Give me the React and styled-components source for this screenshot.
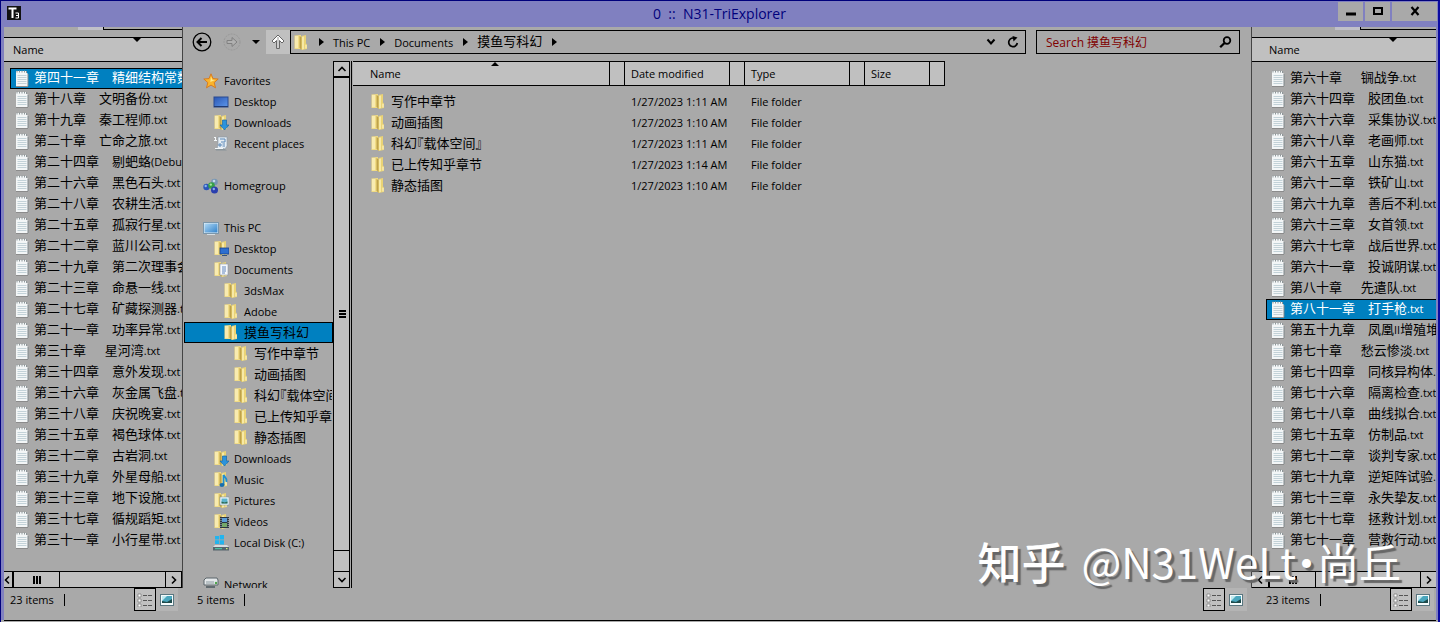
import React from "react";
import styled, { createGlobalStyle, css } from "styled-components";

const GlobalStyle = createGlobalStyle`
  *, *::before, *::after { box-sizing: border-box; }
  html, body { margin: 0; background: #a9a9a9; }
  body {
    font-family: "Open Sans", "Noto Sans CJK SC", sans-serif;
    font-size: 13px;
    line-height: 21px;
    color: #000;
    overflow: hidden;
  }
  button, input, a { font: inherit; color: inherit; }
  button { background: none; border: 0; padding: 0; margin: 0; cursor: default; }
  ul { list-style: none; margin: 0; padding: 0; }
  svg { display: block; flex: none; }
`;

/* ---------- text ---------- */

const Latin = styled.span`
  font-size: 11px;
`;

const Label = styled.span`
  white-space: pre;
  line-height: 20px;
  font-feature-settings: "halt";
  padding-bottom: ${(p) => (p.$cjk ? 2 : 0)}px;
`;

/* Latin runs are set smaller than the Chinese runs beside them. */
function Text({ children }) {
  const runs = children.match(/[\u0020-\u007e]+|[^\u0020-\u007e]+/g) || [];
  const isLatin = (run) => run.charCodeAt(0) < 127;
  return (
    <Label $cjk={!runs.every(isLatin)}>
      {runs.map((run, i) => (isLatin(run) ? <Latin key={i}>{run}</Latin> : run))}
    </Label>
  );
}

/* ---------- icons ---------- */

const FileIcon = () => (
  <svg width="15" height="18" viewBox="1 1 15 18">
    <path d="M2 17.500h12" stroke="#8b8b8b" />
    <path d="M2 2h11v2l1 1v12H2z" fill="#f3f6f7" />
    <path d="M14 5v12" stroke="#7d8588" />
    <path d="M3 1.500v2M5.500 1.500v2M8 1.500v2M10.500 1.500v2M12.500 2v2" stroke="#8d9699" strokeWidth="1" />
    <path d="M3.500 6.500h9M3.500 8.500h9M3.500 10.500h9M3.500 12.500h9M3.500 14.500h9" stroke="#c3d2d8" />
  </svg>
);

const FolderShape = () => (
  <>
    <path d="M1.500 1.500L8 1v14H1.500z" fill="#f1dc85" />
    <path d="M2 2h3v12H2z" fill="#f8ebb0" />
    <path d="M6.500 2L9 3.500V16l-2.500-2z" fill="#bfa24a" />
    <path d="M8.500 2L13 1v8.500l1 1V15l-5.500 1z" fill="#ead375" />
    <path d="M9 3l2-.5V15l-2 .5z" fill="#f7e9a6" />
    <path d="M12.500 10.500l1 .5v3.500h-1z" fill="#fff8cf" />
  </>
);

const overlays = {
  plain: null,
  downloads: <path d="M9.500 6h4v5h2.500l-4.500 5-4.500-5h2.500z" fill="#2b93dc" stroke="#1567a8" strokeWidth=".7" />,
  desktop: <><rect x="7" y="8" width="9" height="6" fill="#2d6fd0" stroke="#18418c" strokeWidth=".8" /><path d="M9 15.500h5" stroke="#35507c" /></>,
  documents: <><rect x="7" y="3" width="8" height="11" fill="#f6f8fb" stroke="#8b94a4" strokeWidth=".6" /><path d="M9 6h4M9 8h4M9 10h4M9 12h3" stroke="#4f78b4" strokeWidth=".9" /></>,
  music: <><path d="M10.500 14V4c1 2 4 3 3 7" fill="none" stroke="#1f8fd2" strokeWidth="1.800" /><ellipse cx="9" cy="14" rx="2.500" ry="2" fill="#176eae" /></>,
  pictures: <><rect x="7" y="5" width="9" height="8" fill="#f4fbff" stroke="#7b929c" strokeWidth=".6" /><rect x="8.500" y="6.500" width="6" height="5" fill="#5cb3cc" /><path d="M8.500 11.500v-2l3 1 3-1v2z" fill="#2e6a54" /></>,
  videos: <><rect x="7" y="4" width="9" height="11" fill="#2b3540" /><rect x="9" y="5" width="5" height="4" fill="#5b9dd8" /><rect x="9" y="10" width="5" height="4" fill="#74a86a" /><path d="M8 5v10M15.200 5v10" stroke="#d8dfe5" strokeDasharray="1 1" strokeWidth=".8" /></>,
};

const FolderIcon = ({ kind = "plain" }) => (
  <svg width="16" height="17" viewBox="0 0 16 17"><FolderShape />{overlays[kind]}</svg>
);

const StarIcon = () => (
  <svg width="16" height="16" viewBox="0 0 16 16">
    <path d="M8 .8l2 4.800 5.200.4-4 3.600 1.300 5.200L8 12.100l-4.500 2.700 1.300-5.200-4-3.600L6 5.600z" fill="#fbb52c" stroke="#d6761b" strokeWidth=".9" />
    <path d="M8 3.500l1.300 3.200 3 .3-5 2z" fill="#ffe98a" />
  </svg>
);

const ScreenIcon = ({ light }) => (
  <svg width="16" height="16" viewBox="0 0 16 16">
    <defs>
      <linearGradient id={light ? "scrA" : "scrB"} x1="0" y1="0" x2="1" y2="1">
        <stop offset="0" stopColor={light ? "#b5dcf6" : "#2a56b4"} />
        <stop offset="1" stopColor={light ? "#2d7fc9" : "#5d97ea"} />
      </linearGradient>
    </defs>
    <rect x="1" y="3" width="14" height="10" fill={light ? "url(#scrA)" : "url(#scrB)"} stroke={light ? "#e4eef4" : "#2a4a90"} />
    {light ? <path d="M.5 2.500h15v11H.5z" fill="none" stroke="#597f9c" strokeWidth=".7" /> : <path d="M1 12.500h14" stroke="#203a70" />}
    {light && <path d="M4 14.500h8" stroke="#d5dde2" />}
  </svg>
);

const RecentIcon = () => (
  <svg width="16" height="16" viewBox="0 0 16 16">
    <path d="M5 1h9v9l-2 3H4l1-4z" fill="#e6edf3" stroke="#8799aa" strokeWidth=".6" />
    <path d="M7 3h5v3H8M6 8h2v2H6zM9.500 8H12M9.500 10H12" fill="none" stroke="#5b88b8" />
    <path d="M1 1.500h2M1 4.500h3M2.500 1v4" stroke="#f4f8fa" />
    <path d="M2 12.500h9l3 2H3z" fill="#89949a" /><path d="M2 12.500h8" stroke="#f4f8fa" />
  </svg>
);

const HomegroupIcon = () => (
  <svg width="16" height="16" viewBox="0 0 16 16">
    <circle cx="3.500" cy="9" r="3.200" fill="#2c57b8" /><circle cx="2.700" cy="8" r="1.200" fill="#8db4ee" />
    <circle cx="11.500" cy="4" r="3.300" fill="#7796b4" /><circle cx="11" cy="3" r="1.300" fill="#c3d8ea" />
    <circle cx="8.500" cy="7.500" r="3.300" fill="#37a047" /><circle cx="7.800" cy="6.600" r="1.200" fill="#a6e4a2" />
    <circle cx="11.500" cy="12" r="3.500" fill="#2a3fae" /><circle cx="10.800" cy="11" r="1.200" fill="#89aeea" />
  </svg>
);

const DiskIcon = () => (
  <svg width="16" height="16" viewBox="0 0 16 16">
    <path d="M2 1h4v3.500H2zM6.700 0H11v4.500H6.700zM2 5.200h4V9H2zM6.700 5.200H11v4.300H6.700z" fill="#22b4ee" />
    <path d="M2 10h12l2 2H0z" fill="#d7dcdf" />
    <rect x="0" y="12" width="16" height="3.500" fill="#56656d" /><rect x="2" y="13" width="7" height="1.200" fill="#4fc0a2" /><rect x="13" y="13" width="1.500" height="1.200" fill="#d6f27a" />
  </svg>
);

const NetworkIcon = () => (
  <svg width="16" height="16" viewBox="0 0 16 16">
    <path d="M1 3l2-2h11l1 2v5H1z" fill="#e4e8ea" stroke="#5b656a" />
    <rect x="3" y="4" width="8" height="3" fill="#b8c1c5" /><circle cx="13" cy="6" r="1.200" fill="#4ca349" />
    <path d="M3 10h9" stroke="#616b70" strokeWidth="2" />
  </svg>
);

const treeIcon = (name) =>
  ({ star: <StarIcon />, screen: <ScreenIcon />, pc: <ScreenIcon light />, recent: <RecentIcon />, home: <HomegroupIcon />, disk: <DiskIcon />, network: <NetworkIcon /> }[name] || <FolderIcon kind={name} />);

const Chevron = ({ dir }) => {
  const d = { up: "M1.500 7L5 3.500 8.500 7", down: "M1.500 3L5 6.500 8.500 3", left: "M7 1.500L3.500 5 7 8.500", right: "M3 1.500L6.500 5 3 8.500" }[dir];
  return <svg width="10" height="10" viewBox="0 0 10 10"><path d={d} fill="none" stroke="#000" strokeWidth="1.600" /></svg>;
};

const Grip = ({ vertical }) => (
  <svg width="8" height="8" viewBox="0 0 8 8"><path d={vertical ? "M1 1h7M1 4h7M1 7h7" : "M1 0v8M4 0v8M7 0v8"} stroke="#000" strokeWidth="2" /></svg>
);

const Triangle = ({ dir }) => {
  const d = { up: "M4 0l4 4H0z", down: "M0 0h8L4 4z" }[dir];
  return <svg width="8" height="4" viewBox="0 0 8 4"><path d={d} /></svg>;
};

const CrumbArrow = () => <svg width="5" height="8" viewBox="0 0 5 8"><path d="M0 0l5 4-5 4z" /></svg>;

/* ---------- window frame ---------- */

const Window = styled.div`
  display: flex;
  flex-direction: column;
  height: 100vh;
  background: #a9a9a9;
  border-top: 1px solid #00007c;
  border-left: 1px solid #00007c;
  border-right: 2px solid #0a0aa0;
`;

const TitleBar = styled.header`
  flex: none;
  display: grid;
  grid-template-columns: 1fr auto 1fr;
  align-items: start;
  height: 26px;
  background: #8080c0;
`;

const AppLogo = styled.div`
  margin: 5px 6px;
`;

const Title = styled.h1`
  margin: 0;
  font-size: 14px;
  font-weight: 400;
  line-height: 25px;
  color: #00007c;
  white-space: pre;
`;

const Controls = styled.div`
  display: flex;
  justify-content: flex-end;
  gap: 2px;
  padding: 1px 1px 0 0;
`;

const ControlButton = styled.button`
  display: grid;
  place-items: center;
  width: ${(p) => (p.$wide ? 45 : 25)}px;
  height: 19px;
  padding-bottom: 2px;
  background: #a9a9a9;
`;

const Panes = styled.main`
  flex: 1;
  min-height: 0;
  display: flex;
  border: solid #8080c0;
  border-width: 0 2px 0 3px;
  position: relative;
`;

const Bottom = styled.footer`
  flex: none;
  height: 2px;
  border-top: 1px solid #000;
  margin: 0 2px 0 3px;
`;

const Pane = styled.section`
  display: flex;
  flex-direction: column;
  flex: ${(p) => (p.$width ? `0 0 ${p.$width}px` : "1 1 0")};
  min-width: 0;
  overflow: hidden;
`;

const PaneBody = styled.div`
  flex: 1;
  min-height: 0;
  display: flex;
  flex-direction: column;
  border: 0 solid #444;
  border-left-width: ${(p) => (p.$edge === "left" ? 1 : 0)}px;
  border-right-width: ${(p) => (p.$edge === "right" ? 1 : 0)}px;
`;

/* ---------- side panes ---------- */

const Strip = styled.div`
  flex: none;
  display: flex;
  height: 10px;
`;

const StripTab = styled.div`
  width: 25px;
  height: 3px;
  margin-left: ${(p) => p.$indent}px;
  background: #c0c0c8;
`;

const StripBox = styled.div`
  flex: 1;
  height: 3px;
  border: solid #000;
  border-width: 0 0 1px 1px;
`;

const NameHeader = styled.button`
  position: relative;
  flex: none;
  height: 25px;
  padding: 0 0 0 ${(p) => p.$indent}px;
  border: solid #000;
  border-width: 1px 0;
  background: #c0c0c0;
  text-align: left;
  svg { position: absolute; top: 0; left: ${(p) => p.$mark}px; }
`;

const FileList = styled.ul`
  flex: 1;
  min-height: 0;
  overflow: hidden;
  padding: 6px 0 0 ${(p) => p.$indent}px;
`;

const selected = css`
  background: #0080c0;
  border-color: #000;
`;

const FileRow = styled.li`
  display: flex;
  align-items: center;
  gap: 4px;
  height: 21px;
  padding-left: 4px;
  border: 1px solid transparent;
  border-right: 0;
  white-space: nowrap;
  ${(p) => p.$selected && selected}
  ${(p) => p.$selected && "color: #fff;"}
`;

const HScroll = styled.div`
  flex: none;
  display: flex;
  height: 17px;
  border: solid #000;
  border-width: 1px ${(p) => (p.$closed ? 1 : 0)}px 1px 0;
  background: #c0c0c0;
`;

const HArrow = styled.button`
  display: grid;
  place-items: center;
  justify-content: ${(p) => (p.$clipped ? "end" : "center")};
  flex: 0 0 ${(p) => p.$width}px;
  overflow: hidden;
  border: 0 solid #000;
  border-left-width: ${(p) => (p.$end ? 1 : 0)}px;
  border-right-width: ${(p) => (p.$end ? 0 : 2)}px;
`;

const HThumb = styled.div`
  display: grid;
  place-items: center;
  flex: 0 0 46px;
  border-right: 1px solid #000;
  margin-right: auto;
`;

const Status = styled.div`
  flex: none;
  display: flex;
  align-items: flex-start;
  height: 32px;
  padding-left: ${(p) => p.$indent}px;
`;

const StatusText = styled.span`
  display: flex;
  align-items: center;
  gap: 10px;
  flex: 1;
  height: 23px;
  &::after { content: ""; width: 1px; height: 12px; background: #000; }
`;

const ViewButton = styled.button`
  display: grid;
  place-items: center;
  width: 22px;
  height: 23px;
  border: 1px solid ${(p) => (p.$on ? "#000" : "#b4b4b4")};
  background: ${(p) => (p.$on ? "#c0c0c0" : "#b4b4b4")};
`;

const ViewButtons = styled.div`
  display: flex;
  margin-right: ${(p) => p.$end}px;
`;

function StatusBar({ indent, count, end = 3 }) {
  return (
    <Status $indent={indent}>
      <StatusText><Text>{`${count} items`}</Text></StatusText>
      <ViewButtons $end={end}>
        <ViewButton $on aria-label="Details view">
          <svg width="16" height="14" viewBox="0 0 16 14">
            <path d="M1 1h3v3H1zM1 6h3v3H1zM1 11h3v3H1z" fill="#fff" stroke="#777" strokeWidth=".7" />
            <path d="M6 2.500h4M11 2.500h4M6 7.500h4M11 7.500h4M6 12.500h4M11 12.500h4" stroke="#555" />
          </svg>
        </ViewButton>
        <ViewButton aria-label="Thumbnail view">
          <svg width="14" height="12" viewBox="0 0 14 12">
            <rect x=".5" y=".5" width="13" height="11" fill="#f5fbfc" stroke="#5a7780" />
            <rect x="2" y="2" width="10" height="7" fill="#4aa6bd" />
            <path d="M2 2h5L2 7z" fill="#bfe9f0" /><path d="M2 9V7l5 1 5-3v4z" fill="#1d4b4c" />
          </svg>
        </ViewButton>
      </ViewButtons>
    </Status>
  );
}

function SidePane({ side, files, active, layout }) {
  return (
    <Pane $width={layout.width} aria-label={`${side} pane`}>
      <PaneBody $edge={side === "left" ? "right" : "left"}>
        <Strip><StripTab $indent={layout.tab} /><StripBox /></Strip>
        <NameHeader $indent={layout.name} $mark={layout.mark}><Text>Name</Text><Triangle dir="down" /></NameHeader>
        <FileList $indent={layout.list}>
          {files.map((name, i) => (
            <FileRow key={name} $selected={i === active}><FileIcon /><Text>{name}</Text></FileRow>
          ))}
        </FileList>
        <HScroll $closed={side === "left"}>
          <HArrow $width={layout.arrow} $clipped={side === "left"} aria-label="Scroll left"><Chevron dir="left" /></HArrow>
          <HThumb><Grip /></HThumb>
          <HArrow $width={16} $end aria-label="Scroll right"><Chevron dir="right" /></HArrow>
        </HScroll>
      </PaneBody>
      <StatusBar indent={layout.status} count={files.length} end={layout.end} />
    </Pane>
  );
}

/* ---------- centre pane ---------- */

const Toolbar = styled.div`
  flex: none;
  display: flex;
  align-items: center;
  height: 30px;
  margin-bottom: 4px;
  padding: 0 11px 0 9px;
`;

const NavButton = styled.button`
  display: grid;
  place-items: center;
  justify-items: ${(p) => (p.$start ? "start" : "center")};
  width: ${(p) => p.$width}px;
  height: 24px;
  background: ${(p) => (p.$raised ? "#c0c0c0" : "none")};
`;

const Address = styled.nav`
  flex: 1;
  min-width: 0;
  display: flex;
  align-items: center;
  height: 24px;
  margin-right: 10px;
  padding: 0 5px 0 2px;
  border: 1px solid #000;
`;

const Crumb = styled.button`
  display: flex;
  align-items: center;
  gap: 9px;
  padding-left: 10px;
`;

const AddressTools = styled.div`
  display: flex;
  gap: 10px;
  margin-left: auto;
`;

const SearchBox = styled.label`
  display: flex;
  align-items: center;
  width: 204px;
  height: 24px;
  padding: 0 7px 0 9px;
  border: 1px solid #000;
`;

const SearchInput = styled.input`
  flex: 1;
  min-width: 0;
  padding: 0;
  border: 0;
  outline: 0;
  background: none;
  font-size: 12px;
  &::placeholder { color: #800000; opacity: 1; }
`;

const Browser = styled.div`
  flex: 1;
  min-height: 0;
  display: flex;
`;

const Tree = styled.ul`
  flex: 0 0 150px;
  padding: 9px 0 0 1px;
  overflow: hidden;
`;

const TreeRow = styled.li`
  height: 21px;
`;

const TreeButton = styled.button`
  display: flex;
  align-items: center;
  gap: 5px;
  width: 100%;
  height: 21px;
  padding-left: ${(p) => 18 + p.$level * 10}px;
  border: 1px solid transparent;
  overflow: hidden;
  ${(p) => p.$selected && selected}
`;

const VScroll = styled.div`
  flex: 0 0 17px;
  display: flex;
  flex-direction: column;
  border: 1px solid #000;
  background: #c0c0c0;
`;

const VArrow = styled.button`
  display: grid;
  place-items: center;
  flex: 0 0 16px;
  border: 0 solid #000;
  border-top-width: ${(p) => (p.$end ? 1 : 0)}px;
  border-bottom-width: ${(p) => (p.$end ? 0 : 2)}px;
`;

const VThumb = styled.div`
  display: grid;
  place-items: center;
  flex: 1;
  margin-bottom: 20px;
  border-bottom: 1px solid #000;
`;

const Details = styled.div`
  flex: 1;
  min-width: 0;
  margin-left: 1px;
  border-left: 1px solid #000;
  overflow: hidden;
`;

const Table = styled.table`
  table-layout: fixed;
  width: 592px;
  margin-left: 1px;
  border-collapse: separate;
  border-spacing: 0;
  tbody::before { content: ""; display: block; height: 5px; }
`;

const HeadCell = styled.th`
  position: relative;
  width: ${(p) => p.$width}px;
  height: 25px;
  padding: 0 0 0 ${(p) => p.$indent || 6}px;
  border: solid #000;
  border-width: 1px 1px 1px 0;
  background: linear-gradient(#000, #000) right 14px top / 1px 100% no-repeat #c0c0c0;
  font-weight: 400;
  text-align: left;
  svg { position: absolute; top: 0; left: 138px; }
`;

const Cell = styled.td`
  height: 21px;
  padding: 0 0 0 6px;
  white-space: nowrap;
`;

const NameCell = styled.div`
  display: flex;
  align-items: center;
  gap: 5px;
  height: 21px;
  padding-left: 11px;
`;

const Watermark = styled.div`
  position: absolute;
  right: 35px;
  bottom: 29px;
  display: flex;
  gap: 16px;
  font-family: "Noto Sans CJK SC", sans-serif;
  font-size: 42px;
  line-height: 60px;
  color: #fff;
  font-feature-settings: "halt";
  text-shadow: 3px 3px 1px #666;
  white-space: pre;
  pointer-events: none;
  b { font-size: 44px; font-weight: 500; }
`;

/* ---------- data ---------- */

const leftFiles = [
  "第四十一章　精细结构常数.txt", "第十八章　文明备份.txt", "第十九章　秦工程师.txt", "第二十章　亡命之旅.txt",
  "第二十四章　剔蚆蛒(Debug).txt", "第二十六章　黑色石头.txt", "第二十八章　农耕生活.txt", "第二十五章　孤寂行星.txt",
  "第二十二章　蓝川公司.txt", "第二十九章　第二次理事会.txt", "第二十三章　命悬一线.txt", "第二十七章　矿藏探测器.txt",
  "第二十一章　功率异常.txt", "第三十章　  星河湾.txt", "第三十四章　意外发现.txt", "第三十六章　灰金属飞盘.txt",
  "第三十八章　庆祝晚宴.txt", "第三十五章　褐色球体.txt", "第三十二章　古岩洞.txt", "第三十九章　外星母船.txt",
  "第三十三章　地下设施.txt", "第三十七章　循规蹈矩.txt", "第三十一章　小行星带.txt",
];

const rightFiles = [
  "第六十章　  锎战争.txt", "第六十四章　胶团鱼.txt", "第六十六章　采集协议.txt", "第六十八章　老画师.txt",
  "第六十五章　山东猫.txt", "第六十二章　铁矿山.txt", "第六十九章　善后不利.txt", "第六十三章　女首领.txt",
  "第六十七章　战后世界.txt", "第六十一章　投诚阴谋.txt", "第八十章　  先遣队.txt", "第八十一章　打手枪.txt",
  "第五十九章　凤凰II增殖堆.txt", "第七十章　  愁云惨淡.txt", "第七十四章　同核异构体.txt", "第七十六章　隔离检查.txt",
  "第七十八章　曲线拟合.txt", "第七十五章　仿制品.txt", "第七十二章　谈判专家.txt", "第七十九章　逆矩阵试验.txt",
  "第七十三章　永失挚友.txt", "第七十七章　拯救计划.txt", "第七十一章　营救行动.txt",
];

const tree = [
  [0, "star", "Favorites"], [1, "screen", "Desktop"], [1, "downloads", "Downloads"], [1, "recent", "Recent places"], null,
  [0, "home", "Homegroup"], null,
  [0, "pc", "This PC"], [1, "desktop", "Desktop"], [1, "documents", "Documents"], [2, "plain", "3dsMax"], [2, "plain", "Adobe"],
  [2, "plain", "摸鱼写科幻", true], [3, "plain", "写作中章节"], [3, "plain", "动画插图"], [3, "plain", "科幻『载体空间』"],
  [3, "plain", "已上传知乎章节"], [3, "plain", "静态插图"],
  [1, "downloads", "Downloads"], [1, "music", "Music"], [1, "pictures", "Pictures"], [1, "videos", "Videos"], [1, "disk", "Local Disk (C:)"], null,
  [0, "network", "Network"],
];

const folders = [
  ["写作中章节", "1/27/2023 1:11 AM"],
  ["动画插图", "1/27/2023 1:10 AM"],
  ["科幻『载体空间』", "1/27/2023 1:11 AM"],
  ["已上传知乎章节", "1/27/2023 1:14 AM"],
  ["静态插图", "1/27/2023 1:10 AM"],
];

const leftLayout = { width: 179, tab: 74, name: 9, mark: 129, list: 6, arrow: 10, status: 6, end: 5 };
const rightLayout = { width: 185, tab: 83, name: 17, mark: 137, list: 14, arrow: 18, status: 15, end: 2 };

function CenterPane() {
  return (
    <Pane aria-label="center pane">
      <Toolbar>
        <NavButton $width={20} aria-label="Back">
          <svg width="20" height="20" viewBox="0 0 20 20"><circle cx="10" cy="10" r="8.800" fill="none" stroke="#000" strokeWidth="1.300" /><path d="M15 10H6M9.500 6L5.500 10l4 4" fill="none" stroke="#000" strokeWidth="2" /></svg>
        </NavButton>
        <NavButton $width={40} aria-label="Forward">
          <svg width="18" height="18" viewBox="0 0 18 18"><circle cx="9" cy="9" r="8" fill="none" stroke="#999" strokeDasharray="2 1" /><path d="M4 7.500h5V4.500L14 9l-5 4.500v-3H4z" fill="#b0b0b0" stroke="#808080" /></svg>
        </NavButton>
        <NavButton $width={14} $start aria-label="Recent locations"><Triangle dir="down" /></NavButton>
        <NavButton $width={24} $raised aria-label="Up">
          <svg width="14" height="16" viewBox="0 0 14 16"><path d="M5.500 14.500v-8L3 9 1 7l6-6 6 6-2 2-2.500-2.500v8z" fill="#fff" stroke="#666" /><path d="M7 3v11" stroke="#999" /></svg>
        </NavButton>
        <Address aria-label="Address">
          <FolderIcon />
          <Crumb><CrumbArrow /><Text>This PC</Text></Crumb>
          <Crumb><CrumbArrow /><Text>Documents</Text></Crumb>
          <Crumb><CrumbArrow /><Text>摸鱼写科幻</Text></Crumb>
          <Crumb aria-label="Subfolders"><CrumbArrow /></Crumb>
          <AddressTools>
            <NavButton $width={10} aria-label="History">
              <svg width="10" height="8" viewBox="0 0 10 8"><path d="M1.500 1.500L5 5.500l3.500-4" fill="none" stroke="#000" strokeWidth="2" /></svg>
            </NavButton>
            <NavButton $width={14} aria-label="Refresh">
              <svg width="12" height="12" viewBox="0 0 12 12"><path d="M8 2.500A4.300 4.300 0 1 0 10.300 7" fill="none" stroke="#000" strokeWidth="1.700" /><path d="M5.500 0l5 1.500-4 4z" /></svg>
            </NavButton>
          </AddressTools>
        </Address>
        <SearchBox>
          <SearchInput type="text" aria-label="Search" placeholder="Search 摸鱼写科幻" />
          <svg width="13" height="13" viewBox="0 0 13 13"><circle cx="8" cy="4.500" r="3.300" fill="none" stroke="#000" strokeWidth="1.800" /><path d="M5.500 7L1.200 11.300" stroke="#000" strokeWidth="2.300" /></svg>
        </SearchBox>
      </Toolbar>
      <Browser>
        <Tree>
          {tree.map((node, i) => (
            <TreeRow key={i}>
              {node && (
                <TreeButton $level={node[0]} $selected={node[3]}>{treeIcon(node[1])}<Text>{node[2]}</Text></TreeButton>
              )}
            </TreeRow>
          ))}
        </Tree>
        <VScroll>
          <VArrow aria-label="Scroll up"><Chevron dir="up" /></VArrow>
          <VThumb><Grip vertical /></VThumb>
          <VArrow $end aria-label="Scroll down"><Chevron dir="down" /></VArrow>
        </VScroll>
        <Details>
          <Table>
            <thead>
              <tr>
                <HeadCell $width={272} $indent={17}><Text>Name</Text><Triangle dir="up" /></HeadCell>
                <HeadCell $width={120}><Text>Date modified</Text></HeadCell>
                <HeadCell $width={120}><Text>Type</Text></HeadCell>
                <HeadCell $width={80}><Text>Size</Text></HeadCell>
              </tr>
            </thead>
            <tbody>
              {folders.map(([name, date]) => (
                <tr key={name}>
                  <Cell><NameCell><FolderIcon /><Text>{name}</Text></NameCell></Cell>
                  <Cell><Text>{date}</Text></Cell>
                  <Cell><Text>File folder</Text></Cell>
                  <Cell />
                </tr>
              ))}
            </tbody>
          </Table>
        </Details>
      </Browser>
      <StatusBar indent={14} count={5} end={4} />
    </Pane>
  );
}

export default function App() {
  return (
    <>
      <GlobalStyle />
      <Window>
        <TitleBar>
          <AppLogo>
            <svg width="14" height="14" viewBox="0 0 14 14" aria-label="TriExplorer">
              <rect width="14" height="14" fill="#111" />
              <path d="M1.500 2.500h8M5.500 2.500V12" stroke="#fff" strokeWidth="2" />
              <path d="M8.500 7h3v5h-3M9 9.500h2.500" fill="none" stroke="#fff" />
            </svg>
          </AppLogo>
          <Title>0  ::  N31-TriExplorer</Title>
          <Controls>
            <ControlButton aria-label="Minimize"><svg width="10" height="10" viewBox="0 0 10 10"><path d="M0 8h10" stroke="#000" strokeWidth="3" /></svg></ControlButton>
            <ControlButton aria-label="Maximize"><svg width="10" height="10" viewBox="0 0 10 10"><path d="M1 2h8v6H1z" fill="none" stroke="#000" strokeWidth="2" /></svg></ControlButton>
            <ControlButton $wide aria-label="Close"><svg width="10" height="10" viewBox="0 0 10 10"><path d="M1.500 1l7 8M8.500 1l-7 8" stroke="#000" strokeWidth="2.200" /></svg></ControlButton>
          </Controls>
        </TitleBar>
        <Panes>
          <SidePane side="left" files={leftFiles} active={0} layout={leftLayout} />
          <CenterPane />
          <SidePane side="right" files={rightFiles} active={11} layout={rightLayout} />
          <Watermark aria-hidden="true"><b>知乎</b><span>@N31WeLt·尚丘</span></Watermark>
        </Panes>
        <Bottom />
      </Window>
    </>
  );
}
